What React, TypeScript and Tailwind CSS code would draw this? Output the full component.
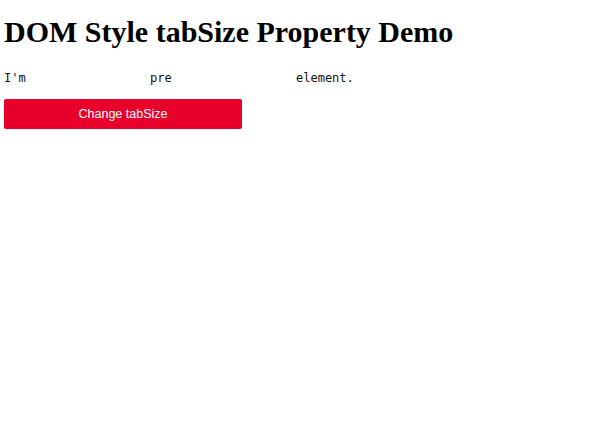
import { useState } from "react";

export default function App() {
  const [tab, setTab] = useState(146);

  return (
    <div className="min-h-screen bg-white px-[4px] pt-[15px] text-black">
      <h1 className="font-['Liberation_Serif',serif] text-[30px] leading-[34px] font-bold">
        DOM Style tabSize Property Demo
      </h1>
      <pre
        className="mt-[21.5px] font-['DejaVu_Sans_Mono',monospace] text-[12px] leading-[14px] text-[#111]"
        style={{ tabSize: `${tab}px` }}
      >
        {"I'm\tpre\telement."}
      </pre>
      <button
        onClick={() => setTab(tab === 146 ? 60 : 146)}
        className="mt-[14.5px] flex h-[30px] w-[238px] items-center justify-center rounded-[2px] bg-[#e8002b] font-['Liberation_Sans',sans-serif] text-[12.5px] text-white"
      >
        Change tabSize
      </button>
    </div>
  );
}
